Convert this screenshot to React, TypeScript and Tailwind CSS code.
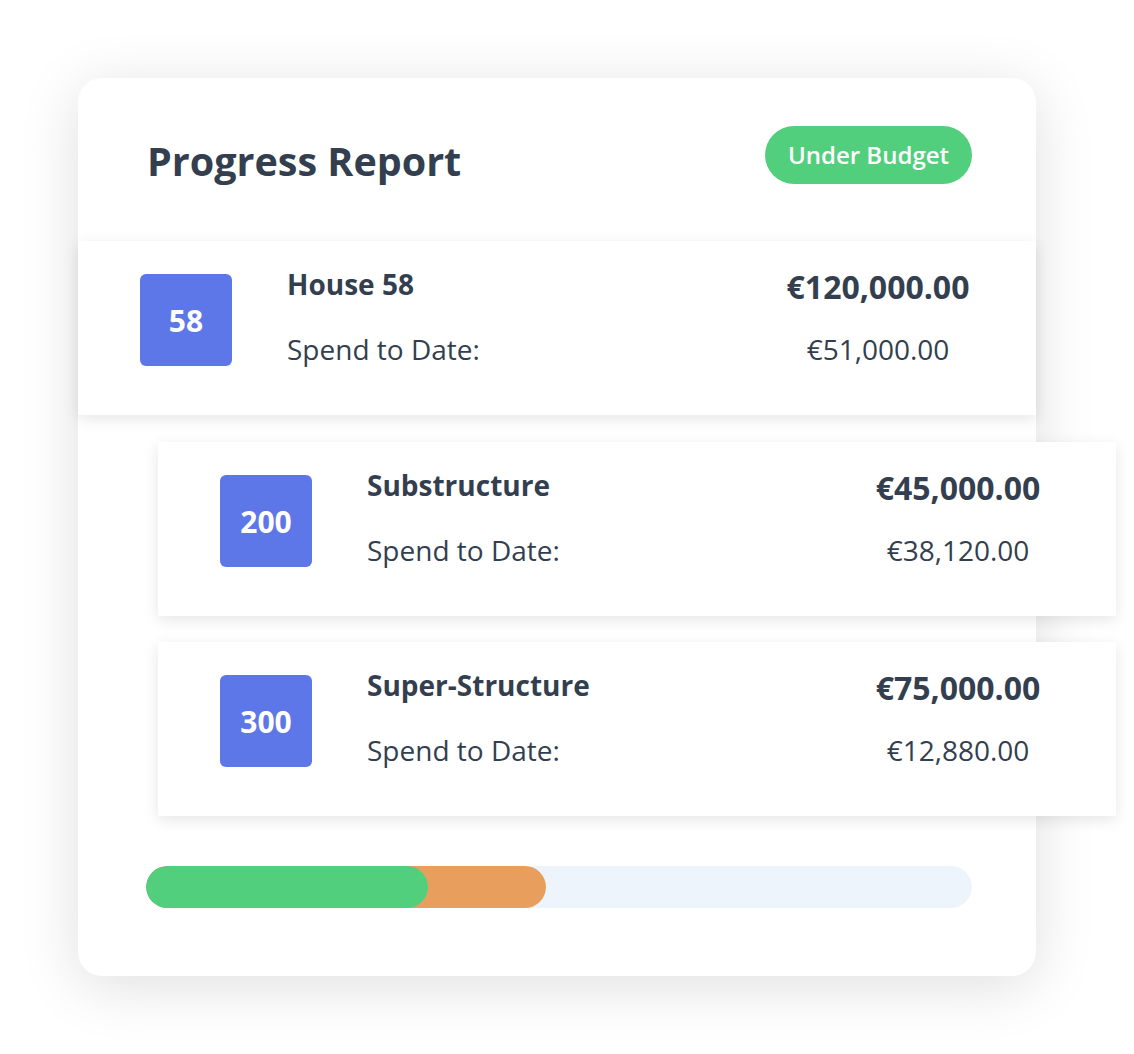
import React from 'react';

type Item = {
  code: string;
  name: string;
  budget: string;
  spent: string;
};

const house: Item = { code: '58', name: 'House 58', budget: '€120,000.00', spent: '€51,000.00' };

const stages: Item[] = [
  { code: '200', name: 'Substructure', budget: '€45,000.00', spent: '€38,120.00' },
  { code: '300', name: 'Super-Structure', budget: '€75,000.00', spent: '€12,880.00' },
];

const ReportRow: React.FC<{ item: Item; className?: string }> = ({ item, className = '' }) => (
  <div
    className={`flex h-[174px] w-[958px] bg-white pl-[62px] pr-[38px] pt-[26px] shadow-[0_4px_14px_rgba(0,0,0,0.10)] ${className}`}
  >
    <div className="mt-[7px] flex h-[92px] w-[92px] shrink-0 items-center justify-center rounded-[6px] bg-[#5e77e8] text-[30px] font-bold text-white">
      {item.code}
    </div>
    <div className="ml-[55px] flex flex-1 flex-col">
      <div className="flex items-start">
        <span className="flex-1 text-[28px] font-bold leading-[35px]">{item.name}</span>
        <span className="w-[240px] text-center text-[32px] font-bold leading-[40px]">{item.budget}</span>
      </div>
      <div className="mt-[25px] flex items-baseline">
        <span className="flex-1 text-[28px] leading-[34px]">Spend to Date:</span>
        <span className="w-[240px] text-center text-[28px] leading-[34px]">{item.spent}</span>
      </div>
    </div>
  </div>
);

export default function App() {
  return (
    <div
      className="min-h-screen bg-white pl-[78px] pt-[78px] text-[#333f4f]"
      style={{ fontFamily: '"Open Sans", "Noto Sans", sans-serif' }}
    >
      <div className="h-[898px] w-[958px] rounded-[24px] bg-white shadow-[0_10px_60px_rgba(0,0,0,0.13)]">
        <div className="flex h-[163px] items-start justify-between pl-[69px] pr-[64px] pt-[48px]">
          <h1 className="mt-[7px] text-[39.5px] font-bold leading-[56px]">Progress Report</h1>
          <span className="flex h-[58px] items-center rounded-full bg-[#52cf7c] px-[23px] text-[24px] font-semibold text-white">
            Under Budget
          </span>
        </div>

        <ReportRow item={house} />

        <div className="mt-[27px] flex flex-col gap-[26px]">
          {stages.map((s) => (
            <ReportRow key={s.code} item={s} className="ml-[80px]" />
          ))}
        </div>

        <div className="ml-[68px] mr-[64px] mt-[50px] h-[42px] overflow-hidden rounded-full bg-[#edf4fc]">
          <div className="relative h-full">
            <div className="absolute left-0 top-0 h-full w-[400px] rounded-full bg-[#e89f5e]" />
            <div className="absolute left-0 top-0 h-full w-[282px] rounded-full bg-[#52cf7c]" />
          </div>
        </div>
      </div>
    </div>
  );
}
